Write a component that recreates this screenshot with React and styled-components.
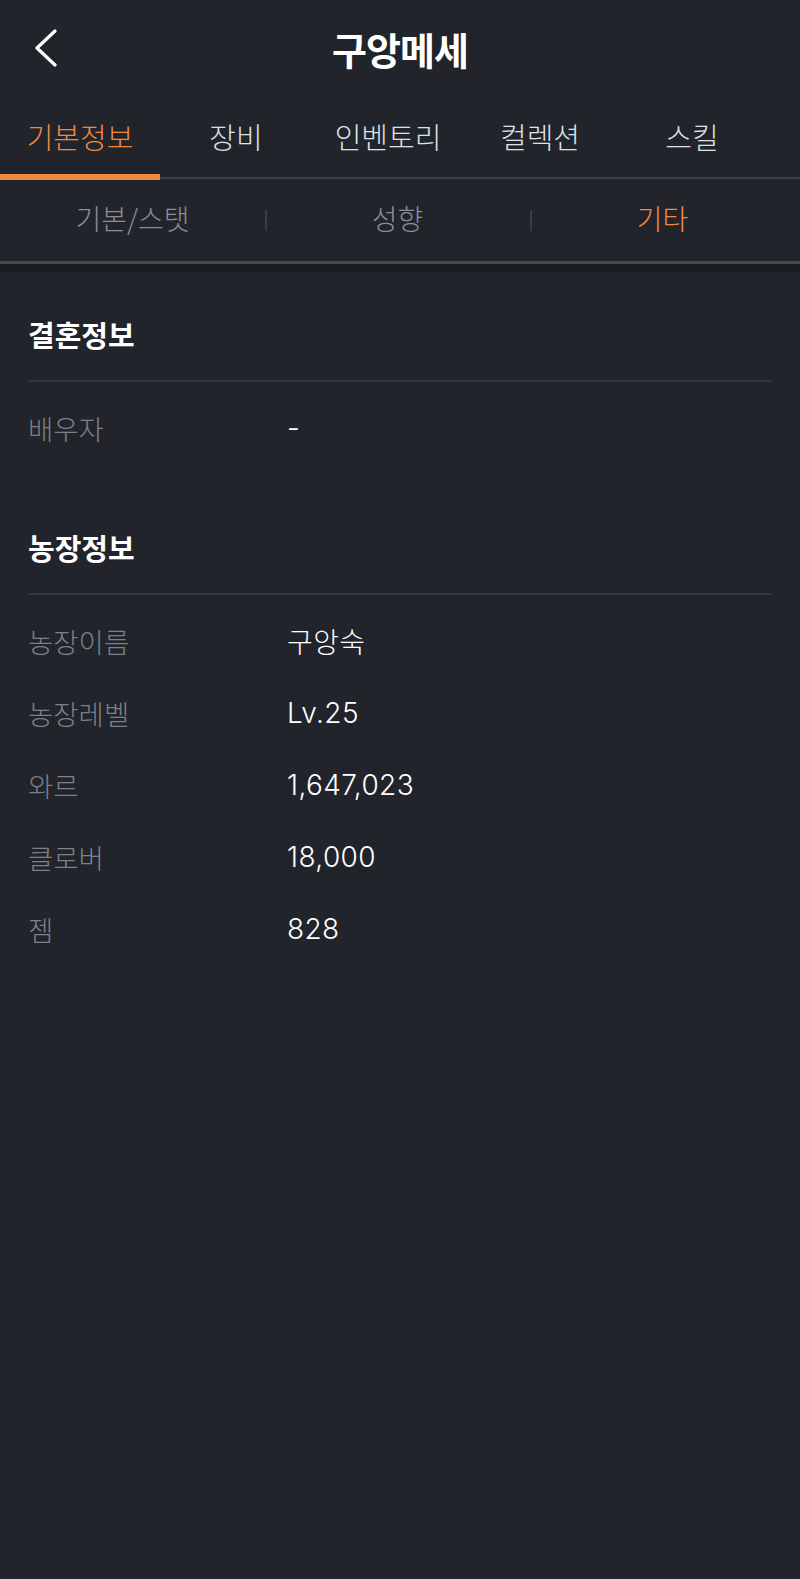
import React from 'react'
import styled, {createGlobalStyle} from 'styled-components'

const GlobalStyle = createGlobalStyle`
  html, body {
    margin: 0;
    padding: 0;
    background: #21242b;
  }
  body {
    font-family: 'Noto Sans CJK KR', 'Noto Sans', sans-serif;
    color: #ffffff;
  }
  * { box-sizing: border-box; }
`

const Page = styled.div`
  width: 800px;
  min-height: 1579px;
  background: #21242b;
`

const Header = styled.header`
  display: grid;
  grid-template-columns: 100px 1fr 100px;
  align-items: center;
  height: 96px;
`

const BackButton = styled.button`
  display: flex;
  align-items: center;
  height: 96px;
  padding: 0 0 0 33px;
  border: 0;
  background: none;
  cursor: pointer;
`

const Title = styled.h1`
  margin: 0;
  text-align: center;
  font-size: 38px;
  font-weight: 700;
  letter-spacing: -1px;
  color: #ffffff;
`

const TabBar = styled.nav`
  display: flex;
  height: 83px;
  border-bottom: 2px solid #3b3e46;
`

const Tab = styled.div`
  position: relative;
  flex: 0 0 ${p => p.$w}px;
  display: flex;
  align-items: center;
  justify-content: center;
  padding-bottom: 2px;
  font-size: 29px;
  font-weight: 300;
  color: ${p => (p.$active ? '#f0883e' : '#dfe1e6')};
  &::after {
    content: '';
    display: ${p => (p.$active ? 'block' : 'none')};
    position: absolute;
    left: 0;
    right: 0;
    bottom: -3px;
    height: 6px;
    background: #f0883e;
  }
`

const SubTabBar = styled.div`
  display: grid;
  grid-template-columns: repeat(3, 265px);
  height: 85px;
  border-bottom: 3px solid #46494f;
`

const SubTab = styled.div`
  position: relative;
  display: flex;
  align-items: center;
  justify-content: center;
  padding-bottom: 4px;
  font-size: 28px;
  font-weight: 300;
  color: ${p => (p.$active ? '#f0883e' : '#8a8d95')};
  &:not(:first-child)::before {
    content: '';
    position: absolute;
    left: 0;
    top: 31px;
    width: 2px;
    height: 21px;
    background: #393c43;
  }
`

const Strip = styled.div`
  height: 8px;
  background: #1b1d22;
`

const Section = styled.section`
  padding: 42px 28px 21px;
`

const SectionTitle = styled.h2`
  margin: 0;
  padding-bottom: 26px;
  line-height: 40px;
  font-size: 29px;
  font-weight: 700;
  color: #ffffff;
  border-bottom: 2px solid #34373e;
`

const List = styled.div`
  padding-top: 10px;
`

const Row = styled.div`
  display: grid;
  grid-template-columns: 259px 1fr;
  align-items: center;
  height: 72px;
  font-size: 27.5px;
  font-weight: 300;
`

const Label = styled.span`
  color: #7d8088;
`

const Value = styled.span`
  font-family: Inter, 'Noto Sans CJK KR', sans-serif;
  font-size: 28px;
  font-weight: 300;
  letter-spacing: 0.4px;
  color: #ffffff;
`

const ChevronLeft = () => (
  <svg width="26" height="38" viewBox="0 0 26 38" fill="none">
    <path d="M22 2 L4 19 L22 36" stroke="#ffffff" strokeWidth="3.2" strokeLinecap="round" strokeLinejoin="round"/>
  </svg>
)

const tabs = [
  {label: '기본정보', w: 160, active: true},
  {label: '장비', w: 152},
  {label: '인벤토리', w: 152},
  {label: '컬렉션', w: 152},
  {label: '스킬', w: 152}
]

const subTabs = [
  {label: '기본/스탯'},
  {label: '성향'},
  {label: '기타', active: true}
]

const sections = [
  {
    title: '결혼정보',
    rows: [['배우자', '-']]
  },
  {
    title: '농장정보',
    rows: [
      ['농장이름', '구앙숙'],
      ['농장레벨', 'Lv.25'],
      ['와르', '1,647,023'],
      ['클로버', '18,000'],
      ['젬', '828']
    ]
  }
]

export default function App() {
  return (
    <Page>
      <GlobalStyle/>
      <Header>
        <BackButton aria-label="뒤로">
          <ChevronLeft/>
        </BackButton>
        <Title>구앙메세</Title>
        <div/>
      </Header>
      <TabBar>
        {tabs.map(t => (
          <Tab key={t.label} $w={t.w} $active={t.active}>{t.label}</Tab>
        ))}
      </TabBar>
      <SubTabBar>
        {subTabs.map(t => (
          <SubTab key={t.label} $active={t.active}>{t.label}</SubTab>
        ))}
      </SubTabBar>
      <Strip/>
      {sections.map(s => (
        <Section key={s.title}>
          <SectionTitle>{s.title}</SectionTitle>
          <List>
            {s.rows.map(([label, value]) => (
              <Row key={label}>
                <Label>{label}</Label>
                <Value>{value}</Value>
              </Row>
            ))}
          </List>
        </Section>
      ))}
    </Page>
  )
}
